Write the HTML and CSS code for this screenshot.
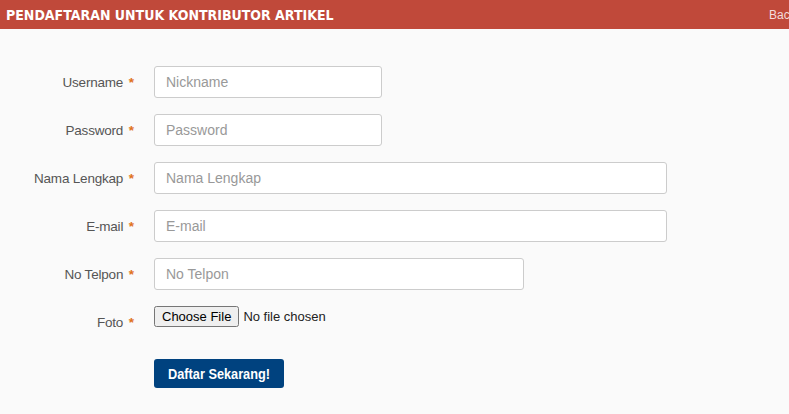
FILE: index.html
```html
<!DOCTYPE html>
<html>
<head>
<meta charset="utf-8">
<link rel="stylesheet" href="styles.css">
</head>
<body>
<header class="topbar">
  <span class="title">PENDAFTARAN UNTUK KONTRIBUTOR ARTIKEL</span>
  <span class="back">Back</span>
</header>
<form class="form">
  <label class="lbl">Username <span class="req">*</span></label>
  <input class="field w-s" type="text" placeholder="Nickname">
  <label class="lbl">Password <span class="req">*</span></label>
  <input class="field w-s" type="password" placeholder="Password">
  <label class="lbl">Nama Lengkap <span class="req">*</span></label>
  <input class="field w-l" type="text" placeholder="Nama Lengkap">
  <label class="lbl">E-mail <span class="req">*</span></label>
  <input class="field w-l" type="text" placeholder="E-mail">
  <label class="lbl">No Telpon <span class="req">*</span></label>
  <input class="field w-m" type="text" placeholder="No Telpon">
  <label class="lbl">Foto <span class="req">*</span></label>
  <div class="filerow"><input class="file" type="file"></div>
  <span></span>
  <div class="actions"><button class="btn" type="button"><span class="btn-text">Daftar Sekarang!</span></button></div>
</form>
</body>
</html>
```
FILE: styles.css
```css
html, body {
  margin: 0;
  padding: 0;
  background: #fafafa;
  font-family: "Liberation Sans", Arial, sans-serif;
  overflow: hidden;
}
.topbar {
  height: 29px;
  background: #c0493a;
  display: flex;
  align-items: center;
  justify-content: space-between;
  padding-left: 6px;
  white-space: nowrap;
  overflow: hidden;
}
.title {
  color: #fff;
  font-family: "DejaVu Sans Condensed", "DejaVu Sans", sans-serif;
  font-stretch: condensed;
  font-weight: bold;
  font-size: 14px;
}
.back {
  color: #f3dcdc;
  font-size: 12px;
  margin-right: -10px;
  width: 30px;
}
.form {
  display: grid;
  grid-template-columns: 134px 1fr;
  column-gap: 20px;
  row-gap: 16px;
  padding-top: 37px;
  align-items: start;
}
.lbl {
  text-align: right;
  color: #555;
  font-size: 13.5px;
  letter-spacing: -0.2px;
  line-height: 20px;
  padding-top: 7px;
}
.req {
  color: #e0721d;
  font-weight: bold;
  letter-spacing: 0;
  margin-left: 2px;
}
.field {
  box-sizing: border-box;
  height: 32px;
  border: 1px solid #ccc;
  border-radius: 3px;
  background: #fff;
  padding: 0 11px;
  font-family: "Liberation Sans", Arial, sans-serif;
  font-size: 14px;
  color: #555;
  outline: none;
}
.field::placeholder { color: #999; }
.w-s { width: 228px; }
.w-l { width: 513px; }
.w-m { width: 370px; }
.filerow {
  height: 32px;
}
.file {
  font-family: "Liberation Sans", Arial, sans-serif;
  font-size: 13px;
  color: #222;
}
.actions {
  margin-top: 5px;
}
.btn {
  width: 130px;
  height: 29px;
  background: #00427f;
  border: none;
  border-radius: 3px;
  color: #fff;
  font-family: "Liberation Sans", Arial, sans-serif;
  font-weight: bold;
  font-size: 14px;
  padding: 0;
}
.btn-text {
  display: inline-block;
  transform: scaleX(0.91);
}
```
